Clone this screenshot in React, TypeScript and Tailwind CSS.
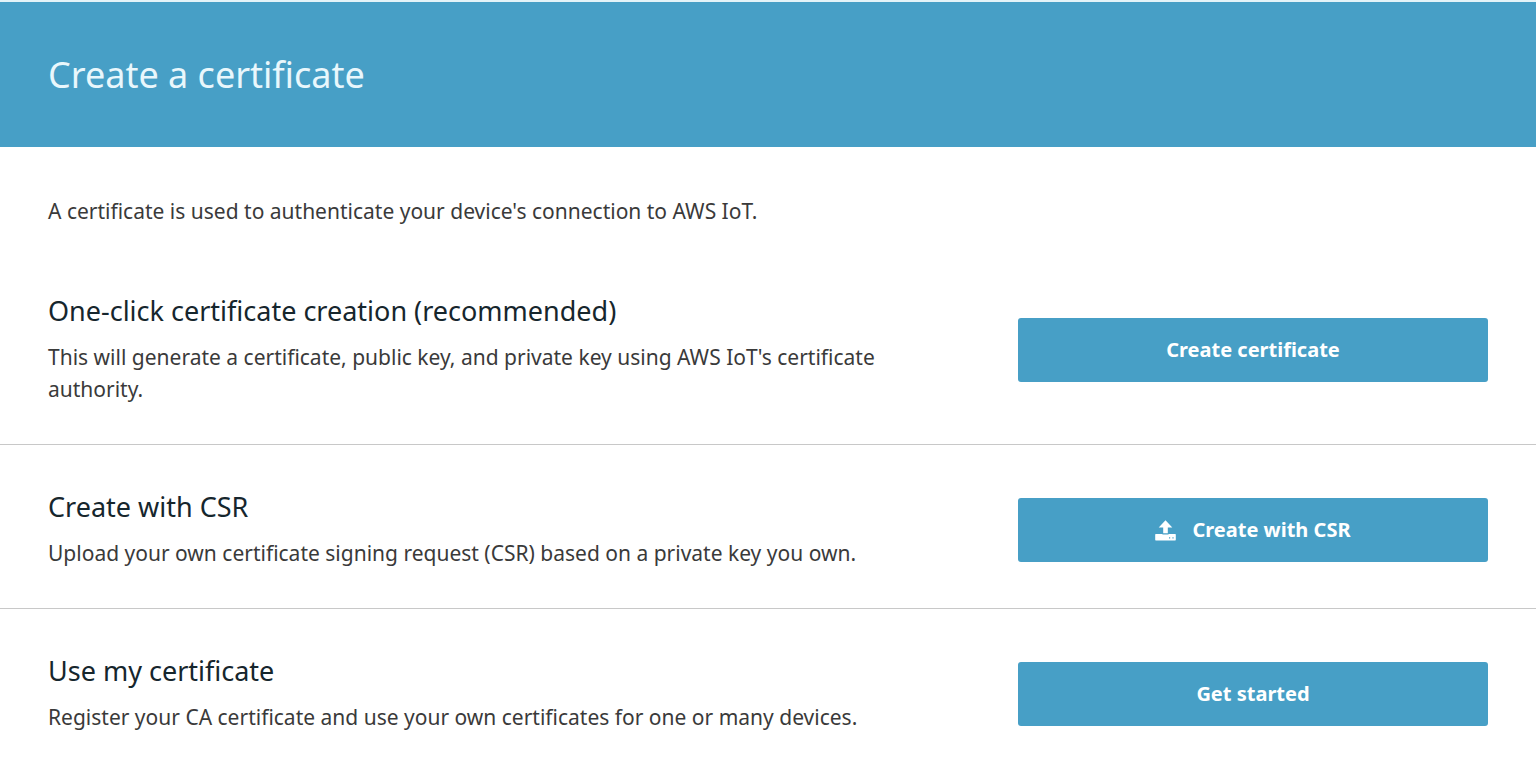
import type { ReactNode } from 'react';

type Option = {
  id: string;
  title: string;
  description: string;
  action: string;
  icon?: ReactNode;
};

function UploadIcon() {
  return (
    <svg viewBox="0 0 21 21" className="h-[21px] w-[21px] shrink-0" fill="currentColor" aria-hidden="true">
      <path d="M10.5 0.3 L17.3 7.4 H12.8 V13.2 H8.2 V7.4 H3.7 Z" />
      <path
        fillRule="evenodd"
        d="M0.8 14 H7.2 Q7.6 14.6 8.4 14.6 H12.6 Q13.4 14.6 13.8 14 H20.2 Q20.8 14 20.8 14.6 V19.8 Q20.8 20.4 20.2 20.4 H0.8 Q0.2 20.4 0.2 19.8 V14.6 Q0.2 14 0.8 14 Z M14 17.2 V18.4 H15.2 V17.2 Z M17.4 17.2 V18.4 H18.6 V17.2 Z"
      />
    </svg>
  );
}

const options: Option[] = [
  {
    id: 'one-click',
    title: 'One-click certificate creation (recommended)',
    description:
      "This will generate a certificate, public key, and private key using AWS IoT's certificate authority.",
    action: 'Create certificate',
  },
  {
    id: 'csr',
    title: 'Create with CSR',
    description: 'Upload your own certificate signing request (CSR) based on a private key you own.',
    action: 'Create with CSR',
    icon: <UploadIcon />,
  },
  {
    id: 'own',
    title: 'Use my certificate',
    description: 'Register your CA certificate and use your own certificates for one or many devices.',
    action: 'Get started',
  },
];

export default function App() {
  return (
    <div className="min-h-screen bg-white font-['Noto_Sans',sans-serif] text-[21px] leading-8 text-[#3a3a3a]">
      <header className="border-t-2 border-[#e3f3f8] bg-[#479fc6] px-12 py-12">
        <h1 className="text-[36px] leading-[49px] text-[#e9f7fc]">Create a certificate</h1>
      </header>

      <main>
        <p className="px-12 pt-12">A certificate is used to authenticate your device&apos;s connection to AWS IoT.</p>

        <div className="divide-y divide-[#c8c8c8] pt-[22px]">
          {options.map((o) => (
            <section
              key={o.id}
              aria-labelledby={o.id}
              className="grid grid-cols-[2fr_1fr] items-center gap-[30px] px-12 pt-[46px] pb-[39px]"
            >
              <div className="pr-12">
                <h2 id={o.id} className="mb-3.5 text-[27px] leading-8 text-[#16262d]">
                  {o.title}
                </h2>
                <p>{o.description}</p>
              </div>
              <button
                type="button"
                className="flex h-16 items-center justify-center gap-4 rounded-[3px] bg-[#479fc6] text-[20px] font-bold text-white"
              >
                {o.icon}
                {o.action}
              </button>
            </section>
          ))}
        </div>
      </main>
    </div>
  );
}
